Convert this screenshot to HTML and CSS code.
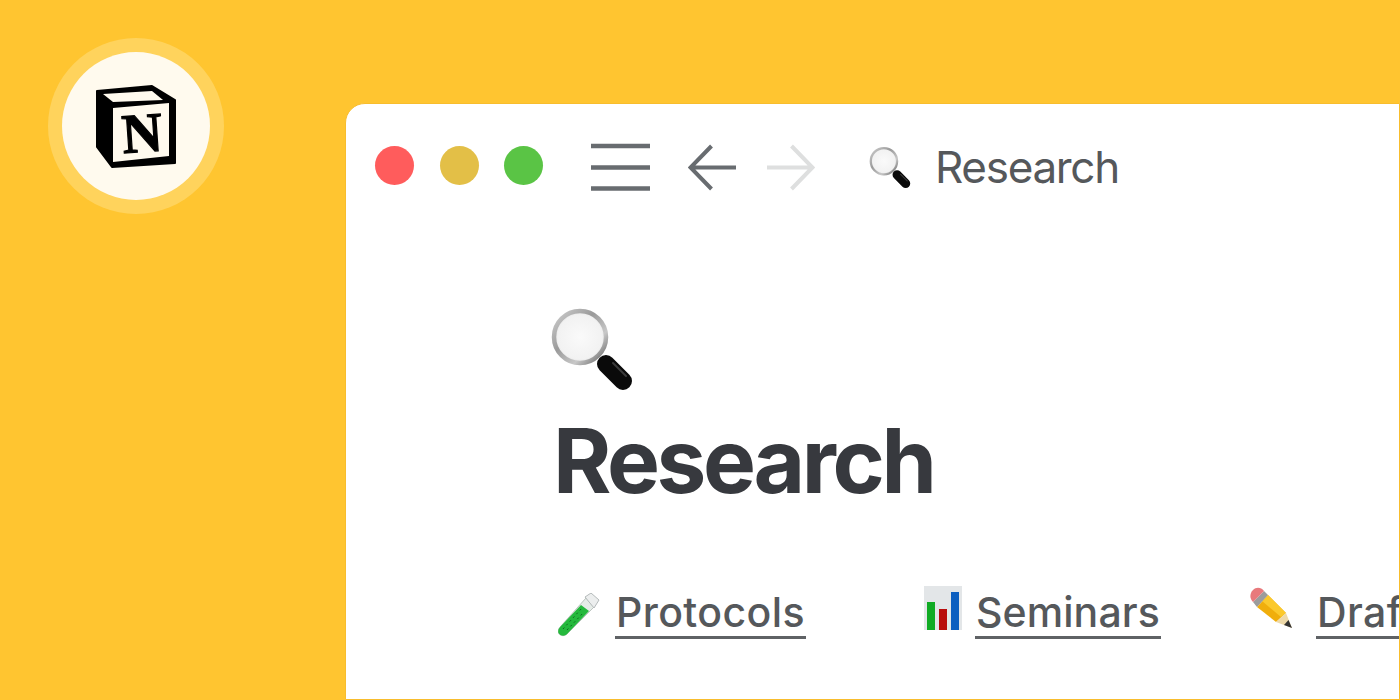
FILE: index.html
```html
<!DOCTYPE html>
<html lang="en">
<head>
  <meta charset="utf-8" />
  <title>Research</title>
  <link rel="stylesheet" href="styles.css">
</head>
<body>
  <svg class="defs" width="0" height="0" aria-hidden="true">
    <defs>
      <radialGradient id="glass" cx="50%" cy="50%" r="50%">
        <stop offset="0" stop-color="#fafafa"/>
        <stop offset="0.85" stop-color="#f2f2f2"/>
        <stop offset="1" stop-color="#e2e2e2"/>
      </radialGradient>
      <linearGradient id="rim" x1="0" y1="0" x2="1" y2="1">
        <stop offset="0" stop-color="#cfcfcf"/>
        <stop offset="0.4" stop-color="#9a9a9a"/>
        <stop offset="0.7" stop-color="#c8c8c8"/>
        <stop offset="1" stop-color="#5e5e5e"/>
      </linearGradient>
      <symbol id="lens" viewBox="0 0 82 83">
        <line x1="55" y1="57" x2="72" y2="74" stroke="#0a0a0a" stroke-width="18" stroke-linecap="round"/>
        <line x1="62" y1="56" x2="75" y2="69" stroke="#3c3c3c" stroke-width="2" stroke-linecap="round"/>
        <circle cx="29" cy="30" r="26" fill="url(#glass)" stroke="url(#rim)" stroke-width="4.5"/>
      </symbol>
    </defs>
  </svg>

  <div class="page">
    <div class="brand">
      <div class="logo-ring">
        <div class="logo-disc">
          <svg class="logo" viewBox="0 -1 80 84">
            <path d="M1 6 56 1 79 15V78L16 82 1 62Z" fill="#000" stroke="#000" stroke-width="2" stroke-linejoin="round"/>
            <path d="M7 9 56 6 67 15 17 17Z" fill="#fffaee"/>
            <path d="M17 23 73 18V71L17 77Z" fill="#fffaee"/>
            <text class="logo-n" x="26" y="67" transform="rotate(-4 45 48)">N</text>
          </svg>
        </div>
      </div>
    </div>

    <div class="window">
      <div class="toolbar">
        <div class="lights">
          <span class="light light-red"></span>
          <span class="light light-yellow"></span>
          <span class="light light-green"></span>
        </div>
        <svg class="menu-icon" viewBox="0 0 59 48">
          <path d="M0 3H59M0 24.5H59M0 45.5H59"/>
        </svg>
        <svg class="arrow-icon" viewBox="0 0 48 47">
          <path d="M48 23.5H3M23.5 2 2.5 23.5 23.5 45"/>
        </svg>
        <svg class="arrow-icon arrow-off" viewBox="0 0 48 47">
          <path d="M0 23.5H45M24.5 2 45.5 23.5 24.5 45"/>
        </svg>
        <svg class="crumb-icon"><use href="#lens"/></svg>
        <span class="crumb">Research</span>
      </div>

      <div class="content">
        <svg class="page-icon"><use href="#lens"/></svg>
        <h1>Research</h1>
        <div class="links">
          <div class="link-item">
            <svg class="tube" viewBox="0 0 42 44">
              <path d="M28 5 36 14 10 40C7 44 2 43 .5 40-.5 37 1 35 3 33Z" fill="#e6ece8" stroke="#bcc4bf"/>
              <path d="M23 12 31 18 10 40C7 44 2 43 .5 40-.5 37 1 35 3 33Z" fill="#25b93d"/>
              <path d="M5 36 24 15M9 37 26 19" stroke="#0f6d20" stroke-width="1" stroke-dasharray="2 3"/>
              <path d="M27 4 33 0 41 7 36 15Z" fill="#eceeee" stroke="#b4baba"/>
            </svg>
            <a class="link" href="#">Protocols</a>
          </div>
          <div class="link-item">
            <svg class="chart" viewBox="0 0 38 44">
              <rect width="38" height="44" fill="#e3e6e8"/>
              <rect x="3" y="16" width="8" height="28" fill="#10ab24"/>
              <rect x="15" y="23" width="8" height="21" fill="#b90c0c"/>
              <rect x="27" y="6" width="8" height="38" fill="#0c5fc0"/>
            </svg>
            <a class="link" href="#">Seminars</a>
          </div>
          <div class="link-item">
            <svg class="pencil" viewBox="0 0 44 44">
              <path d="M18 8 36 26 26 35 7 20Z" fill="#f0ae0c"/>
              <path d="M18 8 36 26 31 30 12 14Z" fill="#fbc92c"/>
              <path d="M36 26 42 41 26 35Z" fill="#eed9a8"/>
              <path d="M38.500 33 42 41 34 38Z" fill="#333"/>
              <path d="M14 4 18 8 7 20 3 15Z" fill="#9c9c9c"/>
              <path d="M14 4 3 15C-1 11 0 6 3 3 6 0 11 0 14 4Z" fill="#e8797c"/>
            </svg>
            <a class="link" href="#">Drafts</a>
          </div>
        </div>
      </div>
    </div>
  </div>
</body>
</html>
```

FILE: styles.css
```css
html, body { margin: 0; padding: 0; height: 100%; overflow: hidden; }
body { background: #ffc530; font-family: Inter, "Liberation Sans", sans-serif; }
.defs { position: absolute; }

.page { display: flex; height: 700px; }

.brand { flex: none; width: 345px; box-sizing: border-box; padding: 38px 0 0 48px; }
.logo-ring { width: 176px; height: 176px; border-radius: 50%; background: #ffd35c; display: flex; align-items: center; justify-content: center; }
.logo-disc { width: 148px; height: 148px; border-radius: 50%; background: #fffaee; display: flex; align-items: center; justify-content: center; }
.logo { width: 80px; height: 84px; }
.logo-n { font-family: "Liberation Serif", serif; font-weight: bold; font-size: 56px; fill: #000; stroke: #000; stroke-width: 1.2; }

.window { flex: 1; margin-top: 103px; background: #fff; border: 1px solid #f8bd2d; border-radius: 20px 0 0 0; overflow: hidden; }

.toolbar { display: flex; align-items: center; height: 80px; padding: 23px 0 0 29px; }
.lights { display: flex; gap: 25.5px; margin: 0 48px 3px 0; }
.light { width: 39px; height: 39px; border-radius: 50%; }
.light-red { background: #ff5c5c; }
.light-yellow { background: #e3bf47; }
.light-green { background: #5ac445; }

.menu-icon { width: 59px; height: 48px; margin-right: 38px; }
.menu-icon path { fill: none; stroke: #686c70; stroke-width: 4.5; }
.arrow-icon { width: 48px; height: 47px; margin-right: 31px; }
.arrow-icon path { fill: none; stroke: #686c70; stroke-width: 4; }
.arrow-off { margin-right: 53px; }
.arrow-off path { stroke: #dedfdf; }
.crumb-icon { width: 44px; height: 42px; margin-right: 23px; }
.crumb { font-size: 44px; line-height: 50px; letter-spacing: -1.3px; color: #55585b; }

.content { padding: 100px 0 0 205px; }
.page-icon { display: block; width: 82px; height: 83px; }
h1 { margin: 21px 0 0 2px; font-size: 89px; line-height: 100px; font-weight: 700; letter-spacing: -3.4px; color: #37393e; }

.links { display: flex; margin: 75px 0 0 7px; white-space: nowrap; }
.link-item { display: flex; align-items: flex-start; }
.link-item:nth-child(1) { margin-right: 118px; }
.link-item:nth-child(2) { margin-right: 89px; }
.link { display: block; margin: 2px 0 0 15px; padding: 0 1px; font-size: 41px; line-height: 48px; letter-spacing: .4px; font-weight: 500; color: #55585b; text-decoration: none; border-bottom: 3.5px solid #5f6265; }
.link-item:nth-child(2) .link { margin-left: 13px; letter-spacing: .1px; }
.tube { width: 42px; height: 44px; margin-top: 7px; }
.chart { width: 38px; height: 44px; }
.pencil { width: 44px; height: 44px; margin: 1px 7px 0 0; }
```
